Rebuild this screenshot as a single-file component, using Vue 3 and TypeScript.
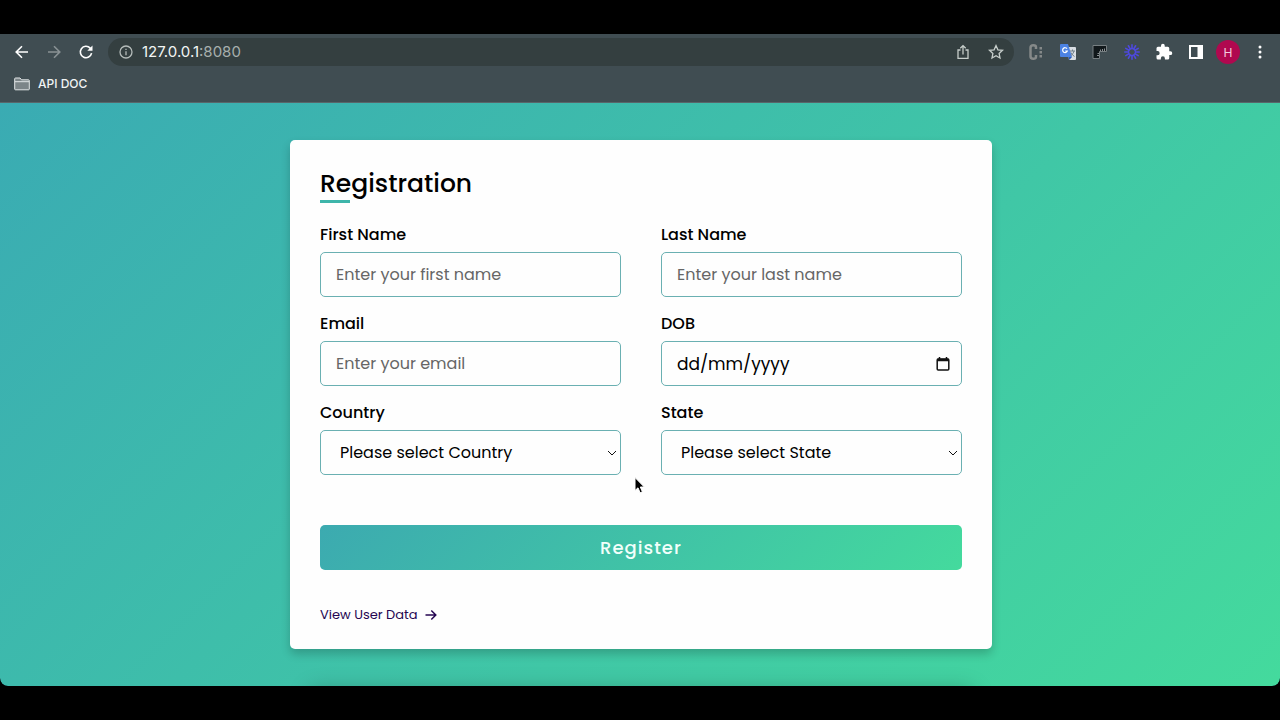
<script setup lang="ts">
import { reactive } from 'vue'

interface Field {
  id: 'firstName' | 'lastName' | 'email' | 'dob' | 'country' | 'state'
  label: string
  kind: 'text' | 'email' | 'date' | 'select'
  hint: string
}

const fields: Field[] = [
  { id: 'firstName', label: 'First Name', kind: 'text', hint: 'Enter your first name' },
  { id: 'lastName', label: 'Last Name', kind: 'text', hint: 'Enter your last name' },
  { id: 'email', label: 'Email', kind: 'email', hint: 'Enter your email' },
  { id: 'dob', label: 'DOB', kind: 'date', hint: 'dd/mm/yyyy' },
  { id: 'country', label: 'Country', kind: 'select', hint: 'Please select Country' },
  { id: 'state', label: 'State', kind: 'select', hint: 'Please select State' },
]

const form = reactive({ firstName: '', lastName: '', email: '', dob: '', country: '', state: '' })
const rays = Array.from({ length: 12 }, (_, i) => i * 30)
</script>

<template>
  <div class="screen">
    <div class="browser">
      <header class="chrome">
        <div class="toolbar">
          <nav class="nav">
            <button class="icon" aria-label="Back">
              <svg width="16" height="16" viewBox="0 0 16 16" class="line"><path d="M14 8H2.5M8 2.2 2.2 8 8 13.8" /></svg>
            </button>
            <button class="icon dim" aria-label="Forward">
              <svg width="16" height="16" viewBox="0 0 16 16" class="line"><path d="M2 8h11.5M8 2.2 13.8 8 8 13.8" /></svg>
            </button>
            <button class="icon" aria-label="Reload">
              <svg width="16" height="16" viewBox="0 0 16 16" class="line"><path d="M13.6 9.2A5.7 5.7 0 1 1 12.2 4.1L13.5 5.4" /><path d="M14.5 1.5v5.2H9.3z" class="solid" /></svg>
            </button>
          </nav>
          <div class="address">
            <svg width="14" height="14" viewBox="0 0 14 14" class="thin"><circle cx="7" cy="7" r="6" /><path d="M7 6.3v3.9M7 3.7v1.3" /></svg>
            <p class="url">127.0.0.1<span>:8080</span></p>
            <button class="icon soft" aria-label="Share">
              <svg width="16" height="16" viewBox="0 0 16 16" class="thin"><path d="M5.500 6H3v8.300h10V6h-2.500M8 10.500V1.800M5.300 4.300 8 1.600l2.700 2.700" /></svg>
            </button>
            <button class="icon soft" aria-label="Bookmark">
              <svg width="16" height="16" viewBox="0 0 16 16" class="thin"><path d="m8 1.600 1.900 4.200 4.600.5-3.400 3.100.9 4.600L8 11.700 4 14l.9-4.600-3.400-3.100 4.600-.5z" /></svg>
            </button>
          </div>
          <div class="extensions">
            <button class="icon" aria-label="Colour extension">
              <svg width="18" height="18" viewBox="0 0 18 18"><path d="M9 6V4.200Q9 2.200 6.300 2.200T3.500 4.700v8.600q0 2.500 2.800 2.500T9 13.800V12" fill="none" stroke="#858989" stroke-width="2.500" /><path d="M12.500 4H15v2.500h-2.500zm0 4H15v2.500h-2.500zm0 4H15v2.500h-2.500z" fill="#858989" /></svg>
            </button>
            <button class="icon" aria-label="Translate">
              <svg width="18" height="18" viewBox="0 0 18 18"><path d="M8 4h8q1 0 1 1v11q0 1-1 1h-6z" fill="#d8dde3" /><path d="M2 1h7l4 13H2q-1 0-1-1V2q0-1 1-1z" fill="#4c82e2" /><path d="M9.500 14H13l-2.700 3z" fill="#2959b7" /><path d="M8 5.700A2.400 2.400 0 1 0 8.300 8H6.300" fill="none" stroke="#fff" stroke-width="1.200" /><path d="M11 8h5M13.500 6.500V8m1.500 0q-.5 3-3 4.500m0-3q1 2.500 3.500 4" fill="none" stroke="#6f7f8b" /></svg>
            </button>
            <button class="icon" aria-label="Ruler">
              <svg width="18" height="18" viewBox="0 0 18 18"><path d="M2 2.500h13.500v6h-7v7H2z" fill="#11181b" stroke="#777f82" /><path d="M9.500 8V6.500m2 1.500V6m2 2V5.500M8 10.500H6.500m1.500 2H6" stroke="#8b9194" /></svg>
            </button>
            <button class="icon" aria-label="Burst">
              <svg width="18" height="18" viewBox="0 0 18 18"><path v-for="r in rays" :key="r" d="M9 5.500V1.800" :transform="`rotate(${r} 9 9)`" stroke="#4d49dc" stroke-width="1.600" stroke-linecap="round" /><circle cx="9" cy="9" r="3.500" fill="none" stroke="#4d49dc" stroke-width="1.300" /></svg>
            </button>
            <button class="icon" aria-label="Extensions">
              <svg width="18" height="18" viewBox="0 0 24 24"><path fill="#fff" d="M20.500 11H19V7a2 2 0 0 0-2-2h-4V3.500a2.500 2.500 0 0 0-5 0V5H4a2 2 0 0 0-2 2v3.800h1.500a2.700 2.700 0 0 1 0 5.400H2V20a2 2 0 0 0 2 2h3.800v-1.500a2.700 2.700 0 0 1 5.400 0V22H17a2 2 0 0 0 2-2v-4h1.500a2.500 2.500 0 0 0 0-5z" /></svg>
            </button>
            <button class="icon" aria-label="Side panel">
              <svg width="18" height="18" viewBox="0 0 18 18"><path fill="#fff" fill-rule="evenodd" d="M2 2h14v14H2zM4 4v10h6.500V4z" /></svg>
            </button>
            <button class="avatar" aria-label="Profile">H</button>
            <button class="icon" aria-label="Menu">
              <svg width="18" height="18" viewBox="0 0 18 18" fill="#fff"><circle cx="9" cy="4" r="1.500" /><circle cx="9" cy="9" r="1.500" /><circle cx="9" cy="14" r="1.500" /></svg>
            </button>
          </div>
        </div>
        <a class="bookmark" href="#">
          <svg width="16" height="14" viewBox="0 0 16 14"><path d="M.7 12V1.800q0-.8.800-.8H6l1.500 1.800h7q.8 0 .8.800V12q0 .8-.8.800h-13q-.8 0-.8-.8z" fill="#7c8588" stroke="#e2e6e7" /><path d="M1 4.700h14" stroke="#e2e6e7" /></svg>
          API DOC
        </a>
      </header>

      <main class="page">
        <form class="card" @submit.prevent>
          <h1>Registration</h1>
          <div class="fields">
            <div v-for="f in fields" :key="f.id" class="field">
              <label :for="f.id">{{ f.label }}</label>
              <select v-if="f.kind === 'select'" :id="f.id" v-model="form[f.id]">
                <option value="">{{ f.hint }}</option>
              </select>
              <input v-else :id="f.id" v-model="form[f.id]" :type="f.kind === 'email' ? 'email' : 'text'" :class="{ date: f.kind === 'date' }" :placeholder="f.hint" />
              <svg v-if="f.kind === 'select'" class="mark chevron" width="10" height="8" viewBox="0 0 10 8"><path d="m1 2 4 4 4-4" /></svg>
              <svg v-if="f.kind === 'date'" class="mark calendar" width="14" height="16" viewBox="0 0 14 16"><rect x="1.200" y="3" width="11.600" height="11" rx="1" /><path d="M1 4h12" stroke-width="2.500" /><path d="M3.500 1v2M10.500 1v2" /></svg>
            </div>
          </div>
          <button class="submit" type="submit">Register</button>
          <a class="link" href="#">
            View User Data
            <svg width="12" height="12" viewBox="0 0 12 12"><path d="M.5 6h10M6.300 1.500 10.800 6l-4.500 4.500" /></svg>
          </a>
        </form>
      </main>
    </div>
    <svg class="cursor" width="14" height="20" viewBox="0 0 14 20"><path d="M2 1.500v13l3-2.700 2.100 5 2.300-1-2.100-4.800h4z" fill="#000" stroke="#fff" /></svg>
  </div>
</template>

<style>
body {
  margin: 0;
  background: #000;
}
</style>

<style scoped>
* {
  box-sizing: border-box;
}

.screen {
  position: relative;
  display: flex;
  min-height: 100vh;
  padding: 34px 0;
  background: #000;
  font-family: Poppins, Inter, "Liberation Sans", sans-serif;
}

.browser {
  display: flex;
  flex: 1;
  flex-direction: column;
  overflow: hidden;
  border-radius: 0 0 8px 8px;
  background: #17313d;
}

.chrome {
  padding: 4px 8px 9px 10px;
  border-bottom: 1px solid #58666a;
  background: #404d52;
  color: #fff;
  font-family: Inter, "Liberation Sans", sans-serif;
}

.toolbar,
.nav,
.extensions,
.address {
  display: flex;
  align-items: center;
}

.toolbar {
  height: 28px;
  gap: 10px;
}

.nav,
.extensions {
  gap: 8px;
}

button {
  padding: 0;
  border: 0;
  font-family: inherit;
  cursor: pointer;
}

.icon {
  display: grid;
  place-items: center;
  width: 24px;
  height: 24px;
  background: none;
  color: #fff;
}

.dim {
  color: #899194;
}

.soft {
  color: #c6cdca;
}

.line,
.thin {
  fill: none;
  stroke: currentColor;
  stroke-width: 1.6;
}

.thin {
  stroke-width: 1.3;
}

.line .solid {
  fill: currentColor;
  stroke: none;
}

.address {
  flex: 1;
  height: 28px;
  gap: 9px;
  padding: 0 6px 0 11px;
  border-radius: 14px;
  background: #343f40;
  color: #b5bcba;
}

.url {
  flex: 1;
  margin: 0;
  color: #f2f5f4;
  font-size: 15px;
  line-height: 20px;
}

.url span {
  color: #a7afad;
}

.avatar {
  width: 24px;
  height: 24px;
  border-radius: 50%;
  background: #b0084f;
  color: #f3cbdc;
  font-size: 12px;
}

.bookmark {
  display: flex;
  align-items: center;
  gap: 8px;
  width: fit-content;
  height: 27px;
  padding-top: 9px;
  padding-left: 4px;
  color: #f1f4f4;
  font-size: 12px;
  font-weight: 500;
  line-height: 18px;
  text-decoration: none;
}

.page {
  flex: 1;
  padding: 37px 20px 36px 22px;
  overflow: hidden;
  border-radius: 0 0 8px 8px;
  background: linear-gradient(135deg, #3aabb3, #44da9d);
}

.card {
  max-width: 702px;
  margin: 0 auto;
  padding: 27px 30px 24px;
  border-radius: 5px;
  background: #fefefe;
  box-shadow: 0 5px 10px rgba(0, 0, 0, 0.2), 0 530px 20px -20px rgba(0, 0, 0, 0.25);
}

h1 {
  display: flex;
  flex-direction: column;
  margin: 0 0 19px;
  color: #000;
  font-size: 25px;
  font-weight: 500;
  line-height: 33px;
}

h1::after {
  width: 30px;
  height: 3px;
  background: #3eb5aa;
  content: "";
}

.fields {
  display: grid;
  grid-template-columns: 1fr 1fr;
  gap: 14px 40px;
}

.field {
  position: relative;
  display: flex;
  flex-direction: column;
  gap: 5px;
}

label {
  color: #000;
  font-size: 16px;
  font-weight: 500;
  line-height: 25px;
}

input,
select {
  width: 100%;
  height: 45px;
  padding: 0 15px;
  border: 1px solid #6ab0b2;
  border-radius: 5px;
  outline: none;
  background: transparent;
  color: #000;
  font-family: inherit;
  font-size: 16px;
}

select {
  padding: 0 19px;
  appearance: none;
}

input::placeholder {
  color: #666;
  opacity: 1;
}

.date {
  font-size: 17px;
}

.date::placeholder {
  color: #000;
}

.mark {
  position: absolute;
  fill: none;
  stroke: #111;
  pointer-events: none;
}

.chevron {
  right: 4px;
  bottom: 18px;
}

.calendar {
  right: 12px;
  bottom: 14px;
  stroke-width: 1.5;
}

.submit {
  width: 100%;
  height: 45px;
  margin-top: 50px;
  border-radius: 5px;
  background: linear-gradient(135deg, #3caab0, #44da9d);
  color: #f2fffb;
  font-size: 18px;
  font-weight: 500;
  letter-spacing: 1px;
}

.link {
  display: flex;
  align-items: center;
  gap: 7px;
  width: fit-content;
  margin-top: 34px;
  color: #260652;
  font-size: 13px;
  line-height: 21px;
  text-decoration: none;
}

.link svg {
  fill: none;
  stroke: currentColor;
  stroke-width: 1.5;
}

.cursor {
  position: absolute;
  top: 476px;
  left: 633px;
  pointer-events: none;
}
</style>
